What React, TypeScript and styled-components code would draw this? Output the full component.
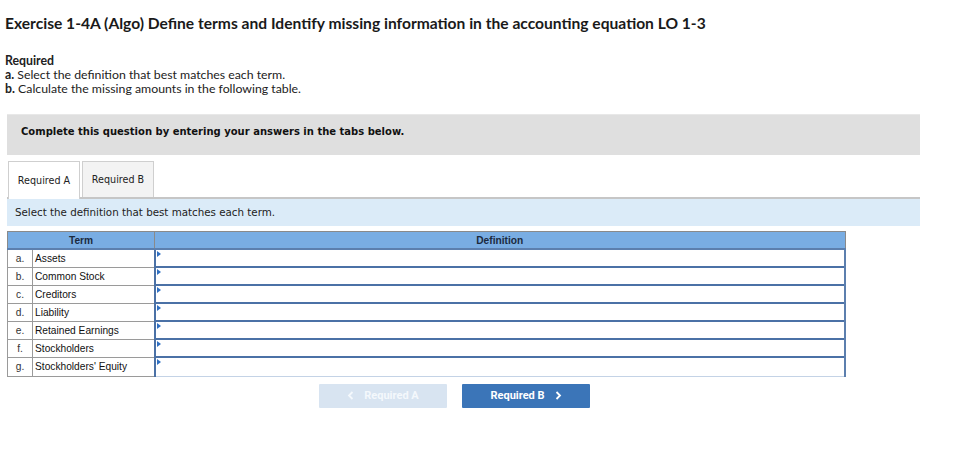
import React from "react";
import styled, { createGlobalStyle } from "styled-components";

const Global = createGlobalStyle`
  html, body { margin: 0; padding: 0; background: #fff; }
  body { font-family: "Liberation Sans", Arial, sans-serif; color: #111; }
`;

const Page = styled.div`
  width: 975px;
  padding: 14px 0 0 0;
  box-sizing: border-box;
`;

const Title = styled.h1`
  margin: 0 0 0 5px;
  font-family: Lato, "Open Sans", sans-serif;
  font-weight: 700;
  font-size: 15.6px;
  line-height: 18px;
  color: #1a1a1a;
`;

const Required = styled.div`
  margin: 22px 0 0 5px;
  font-family: Lato, "Open Sans", sans-serif;
  font-size: 12.3px;
  line-height: 14px;
  color: #222;
`;

const ReqHead = styled.div`
  font-weight: 700;
`;

const ReqLine = styled.div`
  b { font-weight: 700; }
`;

const Main = styled.div`
  margin: 18px 0 0 7px;
  width: 913px;
`;

const Notice = styled.div`
  height: 41px;
  background: #dfdfdf;
  border-top: 1px solid #e8e8e8;
  box-sizing: border-box;
  display: flex;
  align-items: center;
  padding: 0 0 7px 14px;
  font-family: "DejaVu Sans", Verdana, sans-serif;
  font-weight: 700;
  font-size: 10px;
  color: #111;
`;

const TabBar = styled.div`
  margin-top: 6px;
  display: flex;
  gap: 2px;
  padding-left: 1px;
  border-bottom: 2px solid #c6c6c6;
  height: 36px;
  box-sizing: content-box;
`;

const Tab = styled.div<{ $active?: boolean }>`
  width: 72px;
  height: ${(p) => (p.$active ? "38px" : "36px")};
  box-sizing: border-box;
  border: 1px solid #cfcfcf;
  border-bottom: none;
  background: ${(p) => (p.$active ? "#ffffff" : "#f3f3f3")};
  display: flex;
  align-items: center;
  justify-content: center;
  font-family: "DejaVu Sans", Verdana, sans-serif;
  font-size: 9.6px;
  color: #222;
  position: relative;
  z-index: 1;
`;

const InfoBar = styled.div`
  height: 27px;
  background: #dbebf8;
  display: flex;
  align-items: center;
  padding: 0 0 1px 8px;
  box-sizing: border-box;
  font-family: "DejaVu Sans", Verdana, sans-serif;
  font-size: 10.3px;
  color: #222;
`;

const Table = styled.table`
  margin-top: 5px;
  width: 839px;
  border-collapse: collapse;
  table-layout: fixed;
  font-family: "Liberation Sans", Arial, sans-serif;
  font-size: 10.2px;
  color: #111;
`;

const Th = styled.th`
  height: 16px;
  padding: 0;
  background: #79ade3;
  border: 1px solid #8a8a8a;
  border-bottom: 2px solid #5c7fae;
  font-weight: 700;
  font-size: 10.2px;
  text-align: center;
  color: #1b2a3e;
`;

const Row = styled.tr<{ $h: number }>`
  height: ${(p) => p.$h}px;
`;

const LetterCell = styled.td`
  padding: 0;
  border: 1px solid #9a9a9a;
  text-align: center;
  color: #333;
`;

const TermCell = styled.td`
  padding: 0 0 0 2px;
  border: 1px solid #9a9a9a;
  white-space: nowrap;
`;

const DefCell = styled.td`
  padding: 0;
  border-left: 2px solid #4b71a6;
  border-right: 2px solid #5c7fae;
  border-top: 2px solid #4b71a6;
  border-bottom: 1px solid #c4d3e6;
  background: #fff;
  position: relative;
`;

const Marker = styled.span`
  position: absolute;
  left: 1px;
  top: 1px;
  width: 0;
  height: 0;
  border-top: 3px solid transparent;
  border-bottom: 3px solid transparent;
  border-left: 4px solid #2f6fc2;
`;

const Nav = styled.div`
  margin: 7px 0 0 312px;
  display: flex;
  gap: 15px;
`;

const NavButton = styled.button<{ $disabled?: boolean }>`
  width: 128px;
  height: 24px;
  border: none;
  border-radius: 1px;
  background: ${(p) => (p.$disabled ? "#d8e4f1" : "#3b75b8")};
  color: ${(p) => (p.$disabled ? "#f4f8fc" : "#ffffff")};
  font-family: Roboto, "Liberation Sans", sans-serif;
  font-weight: 700;
  font-size: 11px;
  display: flex;
  align-items: center;
  justify-content: center;
  gap: 10px;
  padding: 0;
  cursor: pointer;
`;

const Chevron = styled.svg`
  width: 7px;
  height: 9px;
`;

const terms: [string, string, number][] = [
  ["a.", "Assets", 18],
  ["b.", "Common Stock", 18],
  ["c.", "Creditors", 18],
  ["d.", "Liability", 18],
  ["e.", "Retained Earnings", 18],
  ["f.", "Stockholders", 18],
  ["g.", "Stockholders' Equity", 19],
];

const Left = () => (
  <Chevron viewBox="0 0 7 9">
    <path d="M5.5 1 L2 4.5 L5.5 8" fill="none" stroke="currentColor" strokeWidth="1.8" />
  </Chevron>
);
const Right = () => (
  <Chevron viewBox="0 0 7 9">
    <path d="M1.5 1 L5 4.5 L1.5 8" fill="none" stroke="currentColor" strokeWidth="1.8" />
  </Chevron>
);

export default function App() {
  return (
    <>
      <Global />
      <Page>
        <Title>
          Exercise 1-4A (Algo) Define terms and Identify missing information in the accounting equation LO 1-3
        </Title>
        <Required>
          <ReqHead>Required</ReqHead>
          <ReqLine>
            <b>a.</b> Select the definition that best matches each term.
          </ReqLine>
          <ReqLine>
            <b>b.</b> Calculate the missing amounts in the following table.
          </ReqLine>
        </Required>
        <Main>
          <Notice>Complete this question by entering your answers in the tabs below.</Notice>
          <TabBar>
            <Tab $active>Required A</Tab>
            <Tab>Required B</Tab>
          </TabBar>
          <InfoBar>Select the definition that best matches each term.</InfoBar>
          <Table>
            <colgroup>
              <col style={{ width: 25 }} />
              <col style={{ width: 122 }} />
              <col />
            </colgroup>
            <thead>
              <tr>
                <Th colSpan={2}>Term</Th>
                <Th>Definition</Th>
              </tr>
            </thead>
            <tbody>
              {terms.map(([l, t, h]) => (
                <Row key={l} $h={h}>
                  <LetterCell>{l}</LetterCell>
                  <TermCell>{t}</TermCell>
                  <DefCell>
                    <Marker />
                  </DefCell>
                </Row>
              ))}
            </tbody>
          </Table>
          <Nav>
            <NavButton $disabled>
              <Left />
              Required A
            </NavButton>
            <NavButton>
              Required B
              <Right />
            </NavButton>
          </Nav>
        </Main>
      </Page>
    </>
  );
}
